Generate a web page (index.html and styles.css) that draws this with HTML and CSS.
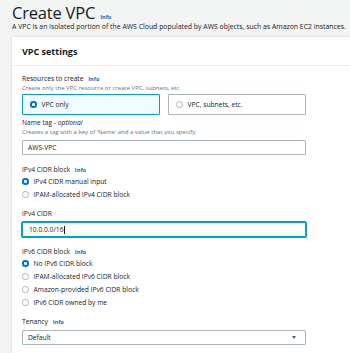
FILE: index.html
```html
<!DOCTYPE html>
<html>
<head>
<meta charset="utf-8">
<link rel="stylesheet" href="styles.css">
</head>
<body>
<div class="page">
  <div class="title-row"><h1 class="title">Create VPC</h1><span class="info">Info</span></div>
  <p class="desc">A VPC is an isolated portion of the AWS Cloud populated by AWS objects, such as Amazon EC2 instances.</p>
  <div class="card">
    <div class="card-header">VPC settings</div>
    <div class="card-body">
      <div class="field">
        <div class="label">Resources to create <span class="info small">Info</span></div>
        <div class="hint">Create only the VPC resource or create VPC, subnets, etc.</div>
        <div class="tiles">
          <div class="tile selected"><span class="radio on"></span>VPC only</div>
          <div class="tile"><span class="radio"></span>VPC, subnets, etc.</div>
        </div>
      </div>
      <div class="field after-tiles">
        <div class="label">Name tag - <i>optional</i></div>
        <div class="hint">Creates a tag with a key of 'Name' and a value that you specify.</div>
        <div class="input">AWS-VPC</div>
      </div>
      <div class="field after-input">
        <div class="label">IPv4 CIDR block <span class="info small">Info</span></div>
        <div class="radios">
          <div class="opt"><span class="radio on"></span>IPv4 CIDR manual input</div>
          <div class="opt"><span class="radio"></span>IPAM-allocated IPv4 CIDR block</div>
        </div>
      </div>
      <div class="field after-radios">
        <div class="label">IPv4 CIDR</div>
        <div class="input focus">10.0.0.0/16<span class="caret"></span></div>
      </div>
      <div class="field after-input">
        <div class="label">IPv6 CIDR block <span class="info small">Info</span></div>
        <div class="radios">
          <div class="opt"><span class="radio on"></span>No IPv6 CIDR block</div>
          <div class="opt"><span class="radio"></span>IPAM-allocated IPv6 CIDR block</div>
          <div class="opt"><span class="radio"></span>Amazon-provided IPv6 CIDR block</div>
          <div class="opt"><span class="radio"></span>IPv6 CIDR owned by me</div>
        </div>
      </div>
      <div class="field after-radios">
        <div class="label">Tenancy <span class="info small">Info</span></div>
        <div class="input select">Default<span class="arrow"></span></div>
      </div>
    </div>
  </div>
</div>
</body>
</html>
```
FILE: styles.css
```css
* { box-sizing: border-box; }
body {
  margin: 0;
  background: #f2f3f3;
  font-family: "Open Sans", "Noto Sans", sans-serif;
  color: #16191f;
}
.page { padding: 3px 0 0 12px; }
.title-row { display: flex; align-items: baseline; gap: 5px; height: 19px; }
.title {
  margin: 0;
  font-size: 16.5px;
  font-weight: 400;
  line-height: 19px;
  letter-spacing: -0.2px;
}
.info { color: #0073bb; font-weight: 700; font-size: 5.6px; }
.info.small { margin-left: 3px; }
.desc {
  margin: 0;
  font-size: 6.9px;
  line-height: 9px;
  color: #16191f;
  white-space: nowrap;
}
.card {
  margin-top: 6px;
  background: #fff;
  box-shadow: 0 0 1px rgba(0,28,36,0.3);
}
.card-header {
  height: 29px;
  display: flex;
  align-items: center;
  padding-left: 10px;
  font-weight: 700;
  font-size: 9px;
  border-bottom: 1px solid #eaeded;
}
.card-body { padding: 8px 0 8px 10px; display: flex; flex-direction: column; }
.after-tiles { margin-top: 3px; }
.after-input { margin-top: 10px; }
.after-radios { margin-top: 8px; }
.label { font-size: 6.7px; line-height: 10px; }
.label .info { font-size: 5.6px; }
.hint { font-size: 6px; line-height: 9px; color: #687078; white-space: nowrap; }
.tiles { display: flex; gap: 8px; margin-top: 1px; }
.tile {
  width: 138px;
  height: 21px;
  border: 1px solid #aab7b8;
  border-radius: 1px;
  display: flex;
  align-items: center;
  padding-left: 7px;
  font-size: 6.7px;
}
.tile.selected { background: #f1faff; border-color: #00a1c9; }
.radio {
  width: 6.5px; height: 6.5px;
  border-radius: 50%;
  border: 1px solid #aab7b8;
  margin-right: 5px;
  flex: none;
  background: #fff;
}
.radio.on { border: 2px solid #0073bb; }
.radios { display: flex; flex-direction: column; }
.opt { display: flex; align-items: center; font-size: 6.7px; height: 13px; }
.input {
  width: 284px;
  height: 15px;
  border: 1px solid #aab7b8;
  border-radius: 1px;
  margin-top: 3px;
  display: flex;
  align-items: center;
  padding-left: 5px;
  font-size: 6.7px;
  background: #fff;
}
.input.focus { border-color: #00a1c9; box-shadow: 0 0 0 1px #00a1c9; padding-left: 6px; }
.caret { display: inline-block; width: 0.5px; height: 8px; background: #16191f; margin-left: 0.5px; }
.select { justify-content: space-between; padding-right: 9px; }
.arrow {
  width: 0; height: 0;
  border-left: 2.5px solid transparent;
  border-right: 2.5px solid transparent;
  border-top: 3.5px solid #545b64;
}
```
